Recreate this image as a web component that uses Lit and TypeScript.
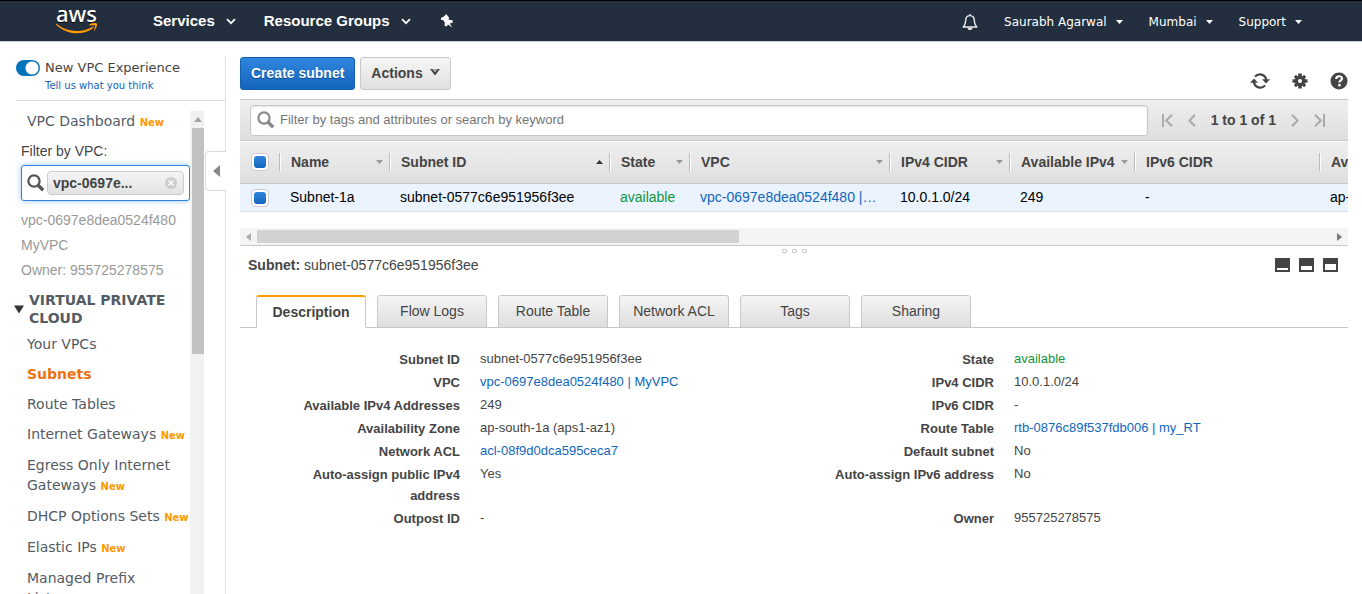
import { LitElement, html, css, svg, nothing } from "lit";
import { customElement, state } from "lit/decorators.js";

interface NavItem {
  label: string;
  last?: string;
  isNew?: boolean;
  active?: boolean;
}

interface Column {
  label: string;
  width: number;
  sort?: "none" | "asc";
}

const NAV: NavItem[] = [
  { label: "Your VPCs" },
  { label: "Subnets", active: true },
  { label: "Route Tables" },
  { label: "Internet", last: "Gateways", isNew: true },
  { label: "Egress Only Internet", last: "Gateways", isNew: true },
  { label: "DHCP Options", last: "Sets", isNew: true },
  { label: "Elastic", last: "IPs", isNew: true },
  { label: "Managed Prefix", last: "Lists", isNew: true },
];

const COLUMNS: Column[] = [
  { label: "Name", width: 110, sort: "none" },
  { label: "Subnet ID", width: 220, sort: "asc" },
  { label: "State", width: 80, sort: "none" },
  { label: "VPC", width: 200, sort: "none" },
  { label: "IPv4 CIDR", width: 120, sort: "none" },
  { label: "Available IPv4 Addresses", width: 125, sort: "none" },
  { label: "IPv6 CIDR", width: 185 },
  { label: "Availability Zone", width: 160 },
];

const TABS = ["Description", "Flow Logs", "Route Table", "Network ACL", "Tags", "Sharing"];

const link = (text: string) => html`<a class="link" href="#">${text}</a>`;

const DETAILS: [string, unknown][] = [
  ["Subnet ID", "subnet-0577c6e951956f3ee"],
  ["State", html`<span class="ok">available</span>`],
  ["VPC", link("vpc-0697e8dea0524f480 | MyVPC")],
  ["IPv4 CIDR", "10.0.1.0/24"],
  ["Available IPv4 Addresses", "249"],
  ["IPv6 CIDR", "-"],
  ["Availability Zone", "ap-south-1a (aps1-az1)"],
  ["Route Table", link("rtb-0876c89f537fdb006 | my_RT")],
  ["Network ACL", link("acl-08f9d0dca595ceca7")],
  ["Default subnet", "No"],
  ["Auto-assign public IPv4 address", "Yes"],
  ["Auto-assign IPv6 address", "No"],
  ["Outpost ID", "-"],
  ["Owner", "955725278575"],
];

const icon = (w: number, h: number, body: unknown, cls = "") =>
  html`<svg class="icon ${cls}" width=${w} height=${h} viewBox="0 0 ${w} ${h}" aria-hidden="true">${body}</svg>`;

const chevron = () =>
  icon(10, 7, svg`<path d="M1 1.2 5 5.2 9 1.2" fill="none" stroke="currentColor" stroke-width="1.700"/>`);
const caret = () => icon(7, 4, svg`<path d="M0 0h7L3.5 4z" fill="currentColor"/>`);
const search = () =>
  icon(18, 18, svg`<circle cx="7" cy="7" r="5.6" fill="none" stroke="currentColor" stroke-width="2.2"/>
    <path d="m11.2 11.2 5 5" stroke="currentColor" stroke-width="3.4"/>`);

@customElement("app-root")
export class AppRoot extends LitElement {
  @state() private tab = "Description";

  static styles = css`
    :host {
      display: flex;
      flex-direction: column;
      height: 100vh;
      overflow: hidden;
      background: #fff;
      color: #444;
      font: 14px/20px "Liberation Sans", Arial, sans-serif;
    }
    * {
      box-sizing: border-box;
    }
    button {
      font: inherit;
      color: inherit;
      background: none;
      border: 0;
      padding: 0;
      margin: 0;
      cursor: pointer;
    }
    a {
      color: inherit;
      text-decoration: none;
    }
    .icon {
      display: block;
      flex: none;
    }
    .link {
      color: #1166bb;
    }
    .ok {
      color: #109640;
    }

    .top {
      flex: none;
      display: flex;
      align-items: center;
      height: 42px;
      padding: 0 60px 0 56px;
      background: #232f3e;
      border-top: 1px solid #000;
      border-bottom: 1px solid #c5cacf;
      color: #fff;
      text-shadow: 0 1px 0 #000;
    }
    .logo {
      margin-right: 55px;
    }
    .logo .icon {
      overflow: visible;
    }
    .logo-text {
      font: 500 22px "Noto Sans", sans-serif;
      fill: #fff;
    }
    .top-main,
    .top-user {
      display: flex;
      align-items: center;
    }
    .top-main {
      gap: 28px;
      font-size: 15px;
      font-weight: bold;
    }
    .top-main .menu {
      gap: 11px;
    }
    .top-user {
      gap: 26px;
      margin-left: auto;
      padding-top: 1px;
      font: 12px/20px "DejaVu Sans", Verdana, sans-serif;
    }
    .top-user .menu {
      gap: 9px;
    }
    .menu {
      display: flex;
      align-items: center;
    }

    .body {
      flex: 1;
      min-height: 0;
      display: flex;
      padding-right: 14px;
    }
    .side {
      position: relative;
      flex: none;
      display: flex;
      flex-direction: column;
      width: 226px;
      margin: 15px 14px 0 0;
      border-right: 1px solid #e0e0e0;
      font-family: "DejaVu Sans", Verdana, sans-serif;
    }
    .experience {
      flex: none;
      display: grid;
      grid-template-columns: 24px 1fr;
      column-gap: 5px;
      align-content: start;
      margin-left: 16px;
      height: 44px;
      border-bottom: 1px solid #d8d8d8;
      font-size: 13px;
      line-height: 22px;
    }
    .experience .link {
      grid-column: 2;
      font-size: 10px;
      line-height: 14px;
    }
    .switch {
      appearance: none;
      align-self: center;
      width: 24px;
      height: 16px;
      margin: 0;
      border-radius: 8px;
      background: radial-gradient(circle at 16px 8px, #fff 6px, #0073bb 7px);
    }
    .side-scroll {
      flex: 1;
      min-height: 0;
      display: flex;
      width: 204px;
      margin-top: 10px;
    }
    .nav {
      flex: 1;
      min-width: 0;
      overflow: hidden;
      color: #545b64;
    }
    .nav-list {
      list-style: none;
      margin: 0;
      padding: 0 0 0 27px;
    }
    .nav-item {
      padding-bottom: 10px;
    }
    .nav-item.is-new {
      padding-bottom: 11px;
    }
    .nav-item.active {
      color: #ec7211;
      font-weight: bold;
    }
    .keep {
      white-space: nowrap;
    }
    .new {
      color: #ff9900;
      font-size: 10px;
      line-height: 10px;
      font-weight: bold;
    }
    .vpc-filter {
      padding-left: 21px;
      color: #999;
      font: 14px/25px "Liberation Sans", Arial, sans-serif;
    }
    .vpc-label {
      display: block;
      line-height: 18px;
      color: #444;
    }
    .vpc-box {
      display: flex;
      align-items: center;
      gap: 2px;
      height: 36px;
      margin: 5px 0 7px;
      padding: 0 5px;
      border: 1px solid #2f80d8;
      border-radius: 3px;
      background: #fff;
      box-shadow: 0 0 6px #9cc8f5;
      color: #555;
    }
    .chip {
      flex: 1;
      display: flex;
      align-items: center;
      justify-content: space-between;
      height: 24px;
      padding: 0 6px 0 5px;
      border: 1px solid #ccc;
      border-radius: 4px;
      background: linear-gradient(#f5f5f5, #e2e2e2);
      font-weight: bold;
      color: #444;
    }
    .group {
      display: flex;
      align-items: center;
      gap: 5px;
      width: 100%;
      padding: 8px 10px 7px 14px;
      font-size: 14px;
      line-height: 18px;
      font-weight: bold;
      text-align: left;
    }
    .vbar {
      flex: none;
      width: 14px;
      background: #f1f1f1;
      padding-left: 2px;
    }
    .vbar-arrow {
      display: flex;
      justify-content: center;
      align-items: center;
      height: 17px;
      color: #a3a3a3;
    }
    .vbar-thumb {
      height: 226px;
      background: #c1c1c1;
    }
    .collapse {
      position: absolute;
      right: -1px;
      top: 94px;
      display: flex;
      align-items: center;
      width: 21px;
      height: 40px;
      padding-left: 7px;
      border: 1px solid #d8d8d8;
      border-right: 0;
      border-radius: 4px 0 0 4px;
      background: #fff;
      color: #888;
    }

    .main {
      flex: 1;
      min-width: 0;
    }
    .toolbar {
      display: flex;
      align-items: flex-start;
      gap: 5px;
      height: 57px;
      padding-top: 15px;
    }
    .btn {
      display: flex;
      align-items: center;
      gap: 7px;
      height: 33px;
      padding: 0 10px 2px;
      border: 1px solid #c8c8c8;
      border-radius: 3px;
      background: linear-gradient(#f6f6f6, #dfdfdf);
      font-weight: bold;
    }
    .btn.primary {
      border-color: #1260b4;
      background: linear-gradient(#2f86dd, #1464bd);
      color: #fff;
      text-shadow: 0 1px 0 #0d4a8c;
    }
    .tools {
      display: flex;
      align-items: center;
      gap: 21px;
      margin: 15px 0 0 auto;
    }
    .filterbar {
      display: flex;
      align-items: center;
      gap: 14px;
      height: 42px;
      padding: 0 23px 0 10px;
      border-top: 1px solid #c8c8c8;
      border-bottom: 1px solid #c8c8c8;
      background: linear-gradient(#efefef, #dedede);
    }
    .field {
      flex: 1;
      display: flex;
      align-items: center;
      gap: 5px;
      height: 31px;
      padding: 0 6px;
      border: 1px solid #c8c8c8;
      border-radius: 3px;
      background: #fff;
      box-shadow: inset 0 1px 2px #e2e2e2;
      color: #888;
    }
    .field-input {
      flex: 1;
      min-width: 0;
      border: 0;
      padding: 0;
      outline: 0;
      background: none;
      font: 13px/20px "Liberation Sans", Arial, sans-serif;
      color: #444;
    }
    .field-input::placeholder {
      color: #757575;
      opacity: 1;
    }
    .pager {
      display: flex;
      align-items: center;
      gap: 15px;
      font-weight: bold;
    }
    .pager .icon {
      color: #aaa;
    }

    .grid {
      overflow: hidden;
    }
    .table {
      table-layout: fixed;
      border-collapse: separate;
      border-spacing: 0;
      width: 1239px;
      color: #000;
    }
    .table th {
      height: 43px;
      padding: 0 0 2px;
      border-top: 1px solid #fff;
      border-bottom: 1px solid #c8c8c8;
      background: linear-gradient(#efefef, #dedede);
      color: #444;
      text-align: left;
    }
    .table td {
      height: 28px;
      padding: 0 11px 2px;
      border-bottom: 1px solid #ddd;
      background: #eaf3fe;
      overflow: hidden;
      text-overflow: ellipsis;
      white-space: nowrap;
    }
    .head {
      display: flex;
      align-items: center;
      gap: 4px;
      height: 18px;
      padding: 0 6px 0 11px;
      border-left: 1px solid #bbb;
      box-shadow: inset 1px 0 #fff;
      color: #999;
    }
    .head-text {
      flex: 1;
      overflow: hidden;
      white-space: nowrap;
      color: #444;
    }
    .head .asc {
      color: #333;
    }
    .check {
      appearance: none;
      display: block;
      width: 18px;
      height: 18px;
      margin: 0 0 0 11px;
      padding: 2px;
      border: 1px solid #ccc;
      border-radius: 4px;
      background: #fff;
    }
    .check:checked::before {
      content: "";
      display: block;
      width: 12px;
      height: 12px;
      border-radius: 3px;
      background: linear-gradient(#2f86dd, #1464bd);
    }
    .table td.check-cell {
      padding: 0;
    }
    .hbar {
      display: flex;
      align-items: center;
      height: 18px;
      margin-top: 16px;
      padding: 0 6px;
      border-bottom: 1px solid #c8c8c8;
      background: #f4f4f4;
      color: #aaa;
    }
    .hbar-thumb {
      width: 44%;
      height: 13px;
      margin-left: 6px;
      background: #d2d2d2;
    }
    .hbar .right {
      margin-left: auto;
      color: #777;
    }
    .grip {
      display: flex;
      justify-content: center;
      gap: 5px;
      padding-top: 3px;
      height: 9px;
    }
    .grip-dot {
      width: 5px;
      height: 4px;
      border: 1px solid #c8c8c8;
      border-radius: 1px;
    }
    .subject {
      display: flex;
      align-items: center;
      gap: 4px;
      padding: 0 10px 0 8px;
    }
    .panes {
      display: flex;
      gap: 9px;
      margin-left: auto;
    }
    .tabs {
      display: flex;
      gap: 11px;
      margin-top: 20px;
      padding-left: 16px;
      box-shadow: inset 0 -1px #c8c8c8;
    }
    .tab {
      width: 110px;
      height: 33px;
      padding-bottom: 2px;
      border: 1px solid #c8c8c8;
      border-radius: 3px 3px 0 0;
      background: linear-gradient(#f5f5f5, #dedede);
    }
    .tab.active {
      padding-bottom: 0;
      border-top: 2px solid #f90;
      border-bottom-color: #fff;
      background: #fff;
      font-weight: bold;
    }
    .details {
      display: grid;
      grid-template-columns: 200px 1fr 200px 1fr;
      row-gap: 2px;
      margin: 0;
      padding: 21px 20px;
      font-size: 13px;
      line-height: 21px;
    }
    .term {
      font-weight: bold;
      text-align: right;
    }
    .value {
      margin: 0;
      padding-left: 20px;
      line-height: 20px;
    }
  `;

  private renderTop() {
    return html`<header class="top">
      <a class="logo" href="#" aria-label="AWS home">
        <svg class="icon" width="42" height="30" viewBox="0 0 42 30">
          <text class="logo-text" x="20.5" y="15.5" text-anchor="middle">aws</text>
          <g transform="translate(0 -1.500)">
            <path d="M0.5 19.2C7 24 13.500 26.400 21 26.400c5.400 0 11-1.400 15.800-4.200.8-.4 1.400.4.700 1C33 26.800 27 28.800 21 28.800 13 28.800 5.500 25.600.2 20.200c-.5-.5-.3-1.300.3-1z" fill="#f90"/>
            <path d="M33.500 19.900c2-1.400 6.600-1.700 7.300-.8.700.9-.2 5-2.300 6.900-.4.300-.7.100-.5-.300.5-1.300 1.500-3.900 1-4.600-.500-.7-3.500-.3-4.800-.2-.9.100-1-.600-.700-1z" fill="#f90"/>
          </g>
        </svg>
      </a>
      <nav class="top-main" aria-label="Console">
        <button class="menu">Services ${chevron()}</button>
        <button class="menu">Resource Groups ${chevron()}</button>
        <button class="menu" aria-label="Pin shortcuts">
          ${icon(16, 16, svg`<path d="M7.200 1 10 4.600 9.700 6.800 13.600 7.200 13.800 9.400 10.800 10.400 13.200 14.600 9 11.600 7.600 13.400 5.600 12.800 5.700 9.400 4.400 7.200 1.900 6.800 2.100 4.800 5 3.600z" fill="#fff"/>`)}
        </button>
      </nav>
      <nav class="top-user" aria-label="Account">
        <button class="menu" aria-label="Notifications">
          ${icon(16, 18, svg`<path d="M8 1v2M8 2.600c-3 0-4.300 2-4.300 4.800 0 3.200-.7 4.600-2.500 6.600h13.600c-1.800-2-2.500-3.400-2.500-6.600C12.300 4.600 11 2.600 8 2.600z" fill="none" stroke="#eee" stroke-width="1.400" stroke-linejoin="round"/><path d="M5.500 15h5a2.500 2 0 0 1-5 0z" fill="#eee"/>`)}
        </button>
        <button class="menu">Saurabh Agarwal ${caret()}</button>
        <button class="menu">Mumbai ${caret()}</button>
        <button class="menu">Support ${caret()}</button>
      </nav>
    </header>`;
  }

  private renderNavItem(item: NavItem) {
    return html`<li class="nav-item ${item.isNew ? "is-new" : ""} ${item.active ? "active" : ""}">
      <a href="#">${item.label}${item.last
        ? html` <span class="keep">${item.last}${item.isNew ? html` <span class="new">New</span>` : nothing}</span>`
        : nothing}</a>
    </li>`;
  }

  private renderSide() {
    return html`<aside class="side">
      <div class="experience">
        <input class="switch" type="checkbox" role="switch" id="exp" checked />
        <label for="exp">New VPC Experience</label>
        <a class="link" href="#">Tell us what you think</a>
      </div>
      <div class="side-scroll">
        <nav class="nav" aria-label="VPC">
          <ul class="nav-list">
            ${this.renderNavItem({ label: "VPC", last: "Dashboard", isNew: true })}
          </ul>
          <div class="vpc-filter">
            <span class="vpc-label">Filter by VPC:</span>
            <div class="vpc-box" role="group" aria-label="Filter by VPC">
              ${search()}
              <span class="chip">vpc-0697e...
                <button aria-label="Remove filter">
                  ${icon(12, 12, svg`<circle cx="6" cy="6" r="6" fill="#ccc"/><path d="m3.500 3.500 5 5m0-5-5 5" stroke="#fff" stroke-width="1.500"/>`)}
                </button>
              </span>
            </div>
            <div>vpc-0697e8dea0524f480</div>
            <div>MyVPC</div>
            <div>Owner: 955725278575</div>
          </div>
          <button class="group" aria-expanded="true">
            ${icon(10, 9, svg`<path d="M0 .5h10L5 8.500z" fill="#333"/>`)}
            <span>VIRTUAL PRIVATE CLOUD</span>
          </button>
          <ul class="nav-list">
            ${NAV.map((n) => this.renderNavItem(n))}
          </ul>
        </nav>
        <div class="vbar" aria-hidden="true">
          <div class="vbar-arrow">${icon(8, 5, svg`<path d="M0 5h8L4 0z" fill="currentColor"/>`)}</div>
          <div class="vbar-thumb"></div>
        </div>
      </div>
      <button class="collapse" aria-label="Collapse sidebar">
        ${icon(7, 12, svg`<path d="M7 0v12L0 6z" fill="currentColor"/>`)}
      </button>
    </aside>`;
  }

  private renderToolbar() {
    return html`<div class="toolbar">
        <button class="btn primary">Create subnet</button>
        <button class="btn">Actions
          ${icon(10, 9, svg`<path d="M0 1h2.500L5 4 7.500 1H10L5 7.500z" fill="#444"/><path d="M2.500 1h5L5 4z" fill="#aaa"/>`)}
        </button>
        <div class="tools">
          <button aria-label="Refresh">
            ${icon(20, 18, svg`<g fill="none" stroke="#444" stroke-width="2.200"><path d="M5 4.600a6.400 6.400 0 0 1 11.200 3.400"/><path d="M3.900 10a6.400 6.400 0 0 0 11.200 3.400"/></g><path d="M0 10.800h8L4 6.400zM12 7.200h8l-4 4.400z" fill="#444"/>`)}
          </button>
          <button aria-label="Settings">
            ${icon(18, 18, svg`<g stroke="#444" stroke-width="3.600"><path d="M9 1.500v15M1.500 9h15"/><path d="m3.900 3.900 10.200 10.200m0-10.200L3.900 14.100" stroke-width="3"/></g><circle cx="9" cy="9" r="5.400" fill="#444"/><circle cx="9" cy="9" r="2" fill="#fff"/>`)}
          </button>
          <button aria-label="Help">
            ${icon(18, 18, svg`<circle cx="9" cy="9" r="8.500" fill="#444"/><path d="M6.200 7c0-3.800 5.800-3.400 5.800-.4 0 1.900-2.600 1.900-2.600 4" fill="none" stroke="#fff" stroke-width="2.200"/><path d="M8.200 12h2.400v2.400H8.200z" fill="#fff"/>`)}
          </button>
        </div>
      </div>
      <div class="filterbar">
        <label class="field">
          ${search()}
          <input class="field-input" type="text" aria-label="Filter subnets" placeholder="Filter by tags and attributes or search by keyword" />
        </label>
        <div class="pager">
          <button aria-label="First page">${icon(11, 13, svg`<path d="M1 0v13M10 .8 4.200 6.500l5.800 5.700" fill="none" stroke="currentColor" stroke-width="2"/>`)}</button>
          <button aria-label="Previous page">${icon(8, 13, svg`<path d="M7 .8 1.400 6.500 7 12.200" fill="none" stroke="currentColor" stroke-width="2"/>`)}</button>
          <span>1 to 1 of 1</span>
          <button aria-label="Next page">${icon(8, 13, svg`<path d="m1 .8 5.600 5.700L1 12.200" fill="none" stroke="currentColor" stroke-width="2"/>`)}</button>
          <button aria-label="Last page">${icon(11, 13, svg`<path d="M10 0v13M1 .8l5.800 5.700L1 12.200" fill="none" stroke="currentColor" stroke-width="2"/>`)}</button>
        </div>
      </div>`;
  }

  private renderTable() {
    return html`<div class="grid">
        <table class="table">
          <colgroup>
            <col style="width:39px" />
            ${COLUMNS.map((c) => html`<col style="width:${c.width}px" />`)}
          </colgroup>
          <thead>
            <tr>
              <th><input class="check" type="checkbox" aria-label="Select all subnets" checked /></th>
              ${COLUMNS.map(
                (c) => html`<th scope="col">
                  <div class="head">
                    <span class="head-text">${c.label}</span>
                    ${c.sort === "none" ? caret() : nothing}
                    ${c.sort === "asc" ? icon(7, 4, svg`<path d="M0 4h7L3.500 0z" fill="currentColor"/>`, "asc") : nothing}
                  </div>
                </th>`
              )}
            </tr>
          </thead>
          <tbody>
            <tr>
              <td class="check-cell"><input class="check" type="checkbox" aria-label="Select Subnet-1a" checked /></td>
              <td>Subnet-1a</td>
              <td>subnet-0577c6e951956f3ee</td>
              <td><span class="ok">available</span></td>
              <td class="link"><a href="#">vpc-0697e8dea0524f480 | MyVPC</a></td>
              <td>10.0.1.0/24</td>
              <td>249</td>
              <td>-</td>
              <td>ap-south-1a</td>
            </tr>
          </tbody>
        </table>
      </div>
      <div class="hbar" aria-hidden="true">
        ${icon(5, 8, svg`<path d="M5 0v8L0 4z" fill="currentColor"/>`)}
        <div class="hbar-thumb"></div>
        ${icon(5, 8, svg`<path d="M0 0v8l5-4z" fill="currentColor"/>`, "right")}
      </div>
      <div class="grip" aria-hidden="true">
        <span class="grip-dot"></span><span class="grip-dot"></span><span class="grip-dot"></span>
      </div>`;
  }

  private renderDetails() {
    const panes: [string, number, number][] = [
      ["Minimise details", 10, 2],
      ["Split view", 8, 4],
      ["Maximise details", 6, 6],
    ];
    return html`<div class="subject">
        <b>Subnet:</b><span>subnet-0577c6e951956f3ee</span>
        <div class="panes">
          ${panes.map(
            ([label, y, h]) => html`<button aria-label=${label}>
              ${icon(15, 14, svg`<path d="M0 0h15v14H0z" fill="#444"/><rect x="2" y=${y} width="11" height=${h} fill="#fff"/>`)}
            </button>`
          )}
        </div>
      </div>
      <div class="tabs" role="tablist">
        ${TABS.map(
          (t) => html`<button
            class="tab ${t === this.tab ? "active" : ""}"
            role="tab"
            aria-selected=${t === this.tab}
            @click=${() => (this.tab = t)}
          >${t}</button>`
        )}
      </div>
      <dl class="details">
        ${DETAILS.map(([k, v]) => html`<dt class="term">${k}</dt><dd class="value">${v}</dd>`)}
      </dl>`;
  }

  render() {
    return html`${this.renderTop()}
      <div class="body">
        ${this.renderSide()}
        <main class="main">
          ${this.renderToolbar()} ${this.renderTable()} ${this.renderDetails()}
        </main>
      </div>`;
  }
}
